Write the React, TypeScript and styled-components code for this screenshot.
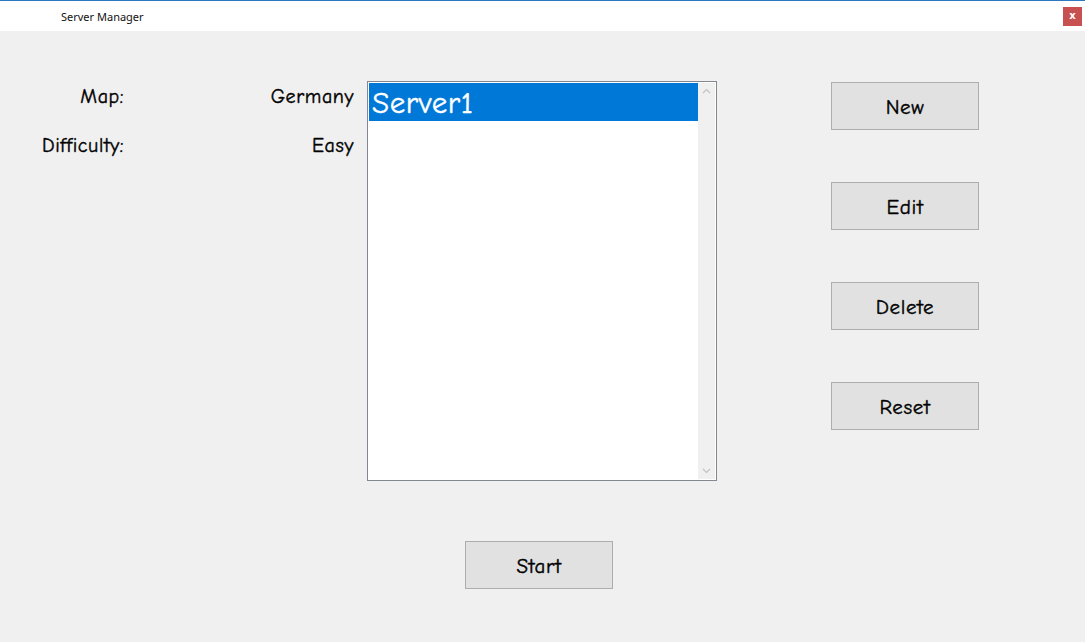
import React from "react";
import styled, { createGlobalStyle } from "styled-components";

const Global = createGlobalStyle`
  html, body { margin: 0; padding: 0; }
  body { width: 1085px; height: 642px; overflow: hidden; background: #f0f0f0; }
  * { box-sizing: border-box; }
`;

const uiFont = `"Comic Sans MS", "Comic Neue", "Open Sans", sans-serif`;

const Window = styled.div`
  width: 1085px;
  height: 642px;
  display: flex;
  flex-direction: column;
  background: #f0f0f0;
`;

const TitleBar = styled.div`
  height: 31px;
  flex: none;
  background: #ffffff;
  border-top: 1px solid #2b79c2;
  display: flex;
  align-items: center;
  padding-left: 61px;
  padding-right: 3px;
`;

const Title = styled.span`
  font-family: "Noto Sans", "Open Sans", sans-serif;
  font-size: 11px;
  color: #111;
`;

const CloseButton = styled.div`
  margin-left: auto;
  width: 19px;
  height: 19px;
  margin-top: 1px;
  background: #c75050;
  color: #fff;
  font-family: "DejaVu Sans", sans-serif;
  font-size: 10px;
  font-weight: bold;
  display: flex;
  align-items: center;
  justify-content: center;
  padding-bottom: 2px;
`;

const Body = styled.div`
  flex: 1;
  display: flex;
  padding: 50px 0 0 30px;
  font-family: ${uiFont};
  color: #000;
  -webkit-text-stroke: 0.4px currentColor;
`;

const FieldColumn = styled.div<{ $width: number }>`
  width: ${(p) => p.$width}px;
  display: flex;
  flex-direction: column;
  gap: 25px;
  padding-top: 4px;
  text-align: right;
`;

const FieldText = styled.div`
  font-size: 20px;
  letter-spacing: 0.6px;
  line-height: 24px;
  height: 24px;
  white-space: nowrap;
`;

const CenterColumn = styled.div`
  margin-left: 13px;
  display: flex;
  flex-direction: column;
`;

const ListBox = styled.div`
  width: 350px;
  height: 400px;
  background: #fff;
  border: 1px solid #828790;
  padding: 1px;
  display: flex;
`;

const ListItems = styled.div`
  flex: 1;
  display: flex;
  flex-direction: column;
`;

const ListItem = styled.div<{ $selected?: boolean }>`
  height: 38px;
  padding-left: 3px;
  padding-top: 2px;
  display: flex;
  align-items: center;
  font-size: 31px;
  letter-spacing: 0.6px;
  background: ${(p) => (p.$selected ? "#0078d7" : "transparent")};
  color: ${(p) => (p.$selected ? "#fff" : "#000")};
`;

const ScrollBar = styled.div`
  width: 17px;
  background: #f0f0f0;
  display: flex;
  flex-direction: column;
  justify-content: space-between;
  align-items: center;
  padding: 4px 0;
  -webkit-text-stroke: 0;
`;

const Arrow = styled.svg`
  width: 9px;
  height: 9px;
`;

const ButtonColumn = styled.div`
  margin-left: 114px;
  padding-top: 1px;
  display: flex;
  flex-direction: column;
  gap: 52px;
`;

const Button = styled.button`
  width: 148px;
  height: 48px;
  background: #e1e1e1;
  border: 1px solid #adadad;
  font-family: ${uiFont};
  font-size: 21px;
  letter-spacing: 0.6px;
  -webkit-text-stroke: 0.4px currentColor;
  color: #000;
  padding: 0;
  padding-top: 1px;
  cursor: default;
`;

const StartBtn = styled(Button)`
  margin: 60px 0 0 98px;
`;

export default function App() {
  return (
    <>
      <Global />
      <Window>
        <TitleBar>
          <Title>Server Manager</Title>
          <CloseButton>x</CloseButton>
        </TitleBar>
        <Body>
          <FieldColumn $width={94}>
            <FieldText>Map:</FieldText>
            <FieldText>Difficulty:</FieldText>
          </FieldColumn>
          <FieldColumn $width={230}>
            <FieldText>Germany</FieldText>
            <FieldText>Easy</FieldText>
          </FieldColumn>
          <CenterColumn>
            <ListBox>
              <ListItems>
                <ListItem $selected>Server1</ListItem>
              </ListItems>
              <ScrollBar>
                <Arrow viewBox="0 0 9 9">
                  <path d="M1 6 L4.5 2.5 L8 6" fill="none" stroke="#c2c2c2" strokeWidth="1.2" />
                </Arrow>
                <Arrow viewBox="0 0 9 9">
                  <path d="M1 3 L4.5 6.5 L8 3" fill="none" stroke="#c2c2c2" strokeWidth="1.2" />
                </Arrow>
              </ScrollBar>
            </ListBox>
            <StartBtn>Start</StartBtn>
          </CenterColumn>
          <ButtonColumn>
            <Button>New</Button>
            <Button>Edit</Button>
            <Button>Delete</Button>
            <Button>Reset</Button>
          </ButtonColumn>
        </Body>
      </Window>
    </>
  );
}
